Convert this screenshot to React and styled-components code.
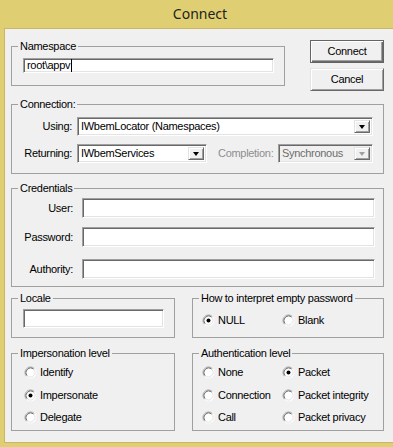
import React from 'react';
import styled, { createGlobalStyle } from 'styled-components';

const Global = createGlobalStyle`
  html, body { margin: 0; padding: 0; background: #e0cf72; }
  body {
    width: 393px; height: 447px; overflow: hidden;
    font-family: "Liberation Sans", Arial, sans-serif;
    font-size: 11px; color: #000;
    letter-spacing: -0.3px;
  }
  #root { width: 393px; height: 447px; }
  * { box-sizing: border-box; }
`;

const Window = styled.div`
  width: 393px;
  height: 447px;
  background: #e0cf72;
  display: flex;
  flex-direction: column;
`;

const TitleBar = styled.div`
  height: 28px;
  flex: none;
  display: flex;
  align-items: center;
  justify-content: center;
  padding-left: 7px;
  padding-bottom: 1px;
  font-family: "Noto Sans", "Open Sans", sans-serif;
  font-size: 14px;
  letter-spacing: 0;
  color: #1e1e1e;
`;

const Client = styled.div`
  margin-left: 4px;
  height: 415px;
  flex: none;
  background: #f0f0f0;
  border: 1px solid #c9b667;
  border-right: none;
  padding: 11px 0 0 6px;
  display: flex;
  flex-direction: column;
`;

const TopRow = styled.div`
  display: flex;
  align-items: flex-start;
  height: 51px;
`;

const Row = styled.div`
  display: flex;
  align-items: flex-start;
  gap: ${p => p.$gap}px;
  margin-top: ${p => p.$mt}px;
`;

const Group = styled.fieldset`
  margin: 0;
  margin-top: ${p => p.$mt || 0}px;
  padding: 0;
  min-width: 0;
  width: ${p => p.$w}px;
  border: 1px solid #a0a0a0;
  flex: none;
`;

const Caption = styled.legend`
  margin-left: 6px;
  padding: 0 2px;
  font-size: 11px;
  line-height: 13px;
  height: 13px;
`;

const Body = styled.div`
  padding: ${p => p.$pad};
`;

const Buttons = styled.div`
  display: flex;
  flex-direction: column;
  gap: 5px;
  margin-left: 25px;
`;

const Button = styled.div`
  width: 74px;
  height: 23px;
  display: flex;
  align-items: center;
  justify-content: center;
  background: #f0f0f0;
  border: 1px solid;
  border-color: ${p => (p.$default ? '#646464' : '#e3e3e3 #696969 #696969 #e3e3e3')};
  box-shadow: ${p =>
    p.$default
      ? 'inset 1px 1px 0 #fff, inset -1px -1px 0 #696969, inset -2px -2px 0 #a0a0a0'
      : 'inset 1px 1px 0 #fff, inset -1px -1px 0 #a0a0a0'};
  padding-bottom: 1px;
`;

const sunken = `
  border: 1px solid;
  border-color: #a0a0a0 #fff #fff #a0a0a0;
  box-shadow: inset 1px 1px 0 #696969, inset -1px -1px 0 #e3e3e3;
`;

const Edit = styled.div`
  ${sunken}
  width: ${p => (p.$w ? `${p.$w}px` : 'auto')};
  height: ${p => p.$h}px;
  background: #fff;
  display: flex;
  align-items: center;
  padding-left: 3px;
  line-height: 13px;
  white-space: pre;
`;

const Caret = styled.span`
  display: inline-block;
  width: 1px;
  height: 13px;
  background: #000;
  margin-left: 1px;
`;

const Combo = styled.div`
  ${sunken}
  width: ${p => (p.$w ? `${p.$w}px` : 'auto')};
  flex: ${p => (p.$w ? 'none' : '1')};
  height: 19px;
  background: ${p => (p.$disabled ? '#f0f0f0' : '#fff')};
  color: ${p => (p.$disabled ? '#6d6d6d' : '#000')};
  display: flex;
  align-items: stretch;
  padding: 2px;
  margin-left: ${p => (p.$push ? 'auto' : '0')};
`;

const ComboText = styled.span`
  flex: 1;
  display: flex;
  align-items: center;
  padding-left: 1px;
  padding-bottom: 1px;
`;

const DropButton = styled.span`
  width: 16px;
  flex: none;
  display: flex;
  align-items: center;
  justify-content: center;
  background: #f0f0f0;
  border: 1px solid;
  border-color: #e3e3e3 #696969 #696969 #e3e3e3;
  box-shadow: inset 1px 1px 0 #fff, inset -1px -1px 0 #a0a0a0;
`;

const Arrow = styled.span`
  width: 0;
  height: 0;
  border-left: 3.5px solid transparent;
  border-right: 3.5px solid transparent;
  border-top: 4px solid ${p => (p.$disabled ? '#a0a0a0' : '#000')};
  margin-top: 1px;
`;

const FormRow = styled.div`
  display: grid;
  grid-template-columns: ${p => p.$label}px 1fr;
  column-gap: ${p => p.$gap}px;
  align-items: center;
  height: ${p => p.$h}px;
  margin-top: ${p => p.$mt || 0}px;
`;

const FieldLabel = styled.span`
  text-align: right;
  color: ${p => (p.$disabled ? '#8e8e8e' : '#000')};
  white-space: nowrap;
  margin-left: ${p => p.$ml || 0}px;
  padding-bottom: 1px;
`;

const Inline = styled.div`
  display: flex;
  align-items: center;
  height: 100%;
`;

const RadioGrid = styled.div`
  display: grid;
  grid-template-columns: ${p => p.$cols};
  grid-template-rows: ${p => p.$rows};
  grid-auto-flow: column;
  align-items: center;
`;

const RadioItem = styled.div`
  display: flex;
  align-items: center;
  gap: 3px;
  white-space: nowrap;
`;

const RadioText = styled.span`
  padding-bottom: 1px;
`;

const Radio = ({ checked, label }) => (
  <RadioItem>
    <svg width="13" height="13" viewBox="0 0 13 13">
      <circle cx="6.5" cy="6.5" r="5.5" fill="#fff" />
      <path d="M2.61 10.39 A5.5 5.5 0 0 1 10.39 2.61" stroke="#a0a0a0" fill="none" />
      <path d="M10.39 2.61 A5.5 5.5 0 0 1 2.61 10.39" stroke="#ffffff" fill="none" />
      <path d="M3.32 9.68 A4.5 4.5 0 0 1 9.68 3.32" stroke="#696969" fill="none" />
      <path d="M9.68 3.32 A4.5 4.5 0 0 1 3.32 9.68" stroke="#e3e3e3" fill="none" />
      {checked && <circle cx="6.5" cy="6.5" r="2" fill="#000" />}
    </svg>
    <RadioText>{label}</RadioText>
  </RadioItem>
);

export default function App() {
  return (
    <>
      <Global />
      <Window>
        <TitleBar>Connect</TitleBar>
        <Client>
          <TopRow>
            <Group $w={274}>
              <Caption>Namespace</Caption>
              <Body $pad="5px 10px 12px 11px">
                <Edit $h={15}>
                  root\appv<Caret />
                </Edit>
              </Body>
            </Group>
            <Buttons>
              <Button $default>Connect</Button>
              <Button>Cancel</Button>
            </Buttons>
          </TopRow>

          <Group $w={373} $mt={7}>
            <Caption>Connection:</Caption>
            <Body $pad="6px 10px 10px 0">
              <FormRow $label={60} $gap={5} $h={19}>
                <FieldLabel>Using:</FieldLabel>
                <Combo>
                  <ComboText>IWbemLocator (Namespaces)</ComboText>
                  <DropButton><Arrow /></DropButton>
                </Combo>
              </FormRow>
              <FormRow $label={60} $gap={5} $h={19} $mt={8}>
                <FieldLabel>Returning:</FieldLabel>
                <Inline>
                  <Combo $w={130}>
                    <ComboText>IWbemServices</ComboText>
                    <DropButton><Arrow /></DropButton>
                  </Combo>
                  <FieldLabel $disabled $ml={11}>Completion:</FieldLabel>
                  <Combo $w={95} $push $disabled>
                    <ComboText>Synchronous</ComboText>
                    <DropButton><Arrow $disabled /></DropButton>
                  </Combo>
                </Inline>
              </FormRow>
            </Body>
          </Group>

          <Group $w={373} $mt={8}>
            <Caption>Credentials</Caption>
            <Body $pad="3px 8px 7px 0">
              <FormRow $label={61} $gap={9} $h={20}>
                <FieldLabel>User:</FieldLabel>
                <Edit $h={20} />
              </FormRow>
              <FormRow $label={61} $gap={9} $h={20} $mt={9}>
                <FieldLabel>Password:</FieldLabel>
                <Edit $h={20} />
              </FormRow>
              <FormRow $label={61} $gap={9} $h={20} $mt={12}>
                <FieldLabel>Authority:</FieldLabel>
                <Edit $h={20} />
              </FormRow>
            </Body>
          </Group>

          <Row $gap={17} $mt={5}>
            <Group $w={164}>
              <Caption>Locale</Caption>
              <Body $pad="4px 10px 9px 11px">
                <Edit $h={19} />
              </Body>
            </Group>
            <Group $w={192}>
              <Caption>How to interpret empty password</Caption>
              <Body $pad="7px 0 9px 9px">
                <RadioGrid $cols="80px auto" $rows="16px">
                  <Radio checked label="NULL" />
                  <Radio label="Blank" />
                </RadioGrid>
              </Body>
            </Group>
          </Row>

          <Row $gap={17} $mt={9}>
            <Group $w={164}>
              <Caption>Impersonation level</Caption>
              <Body $pad="1px 0 1px 12px">
                <RadioGrid $cols="auto" $rows="23px 22px 23px">
                  <Radio label="Identify" />
                  <Radio checked label="Impersonate" />
                  <Radio label="Delegate" />
                </RadioGrid>
              </Body>
            </Group>
            <Group $w={192}>
              <Caption>Authentication level</Caption>
              <Body $pad="1px 0 1px 9px">
                <RadioGrid $cols="80px auto" $rows="23px 22px 23px">
                  <Radio label="None" />
                  <Radio label="Connection" />
                  <Radio label="Call" />
                  <Radio checked label="Packet" />
                  <Radio label="Packet integrity" />
                  <Radio label="Packet privacy" />
                </RadioGrid>
              </Body>
            </Group>
          </Row>
        </Client>
      </Window>
    </>
  );
}
